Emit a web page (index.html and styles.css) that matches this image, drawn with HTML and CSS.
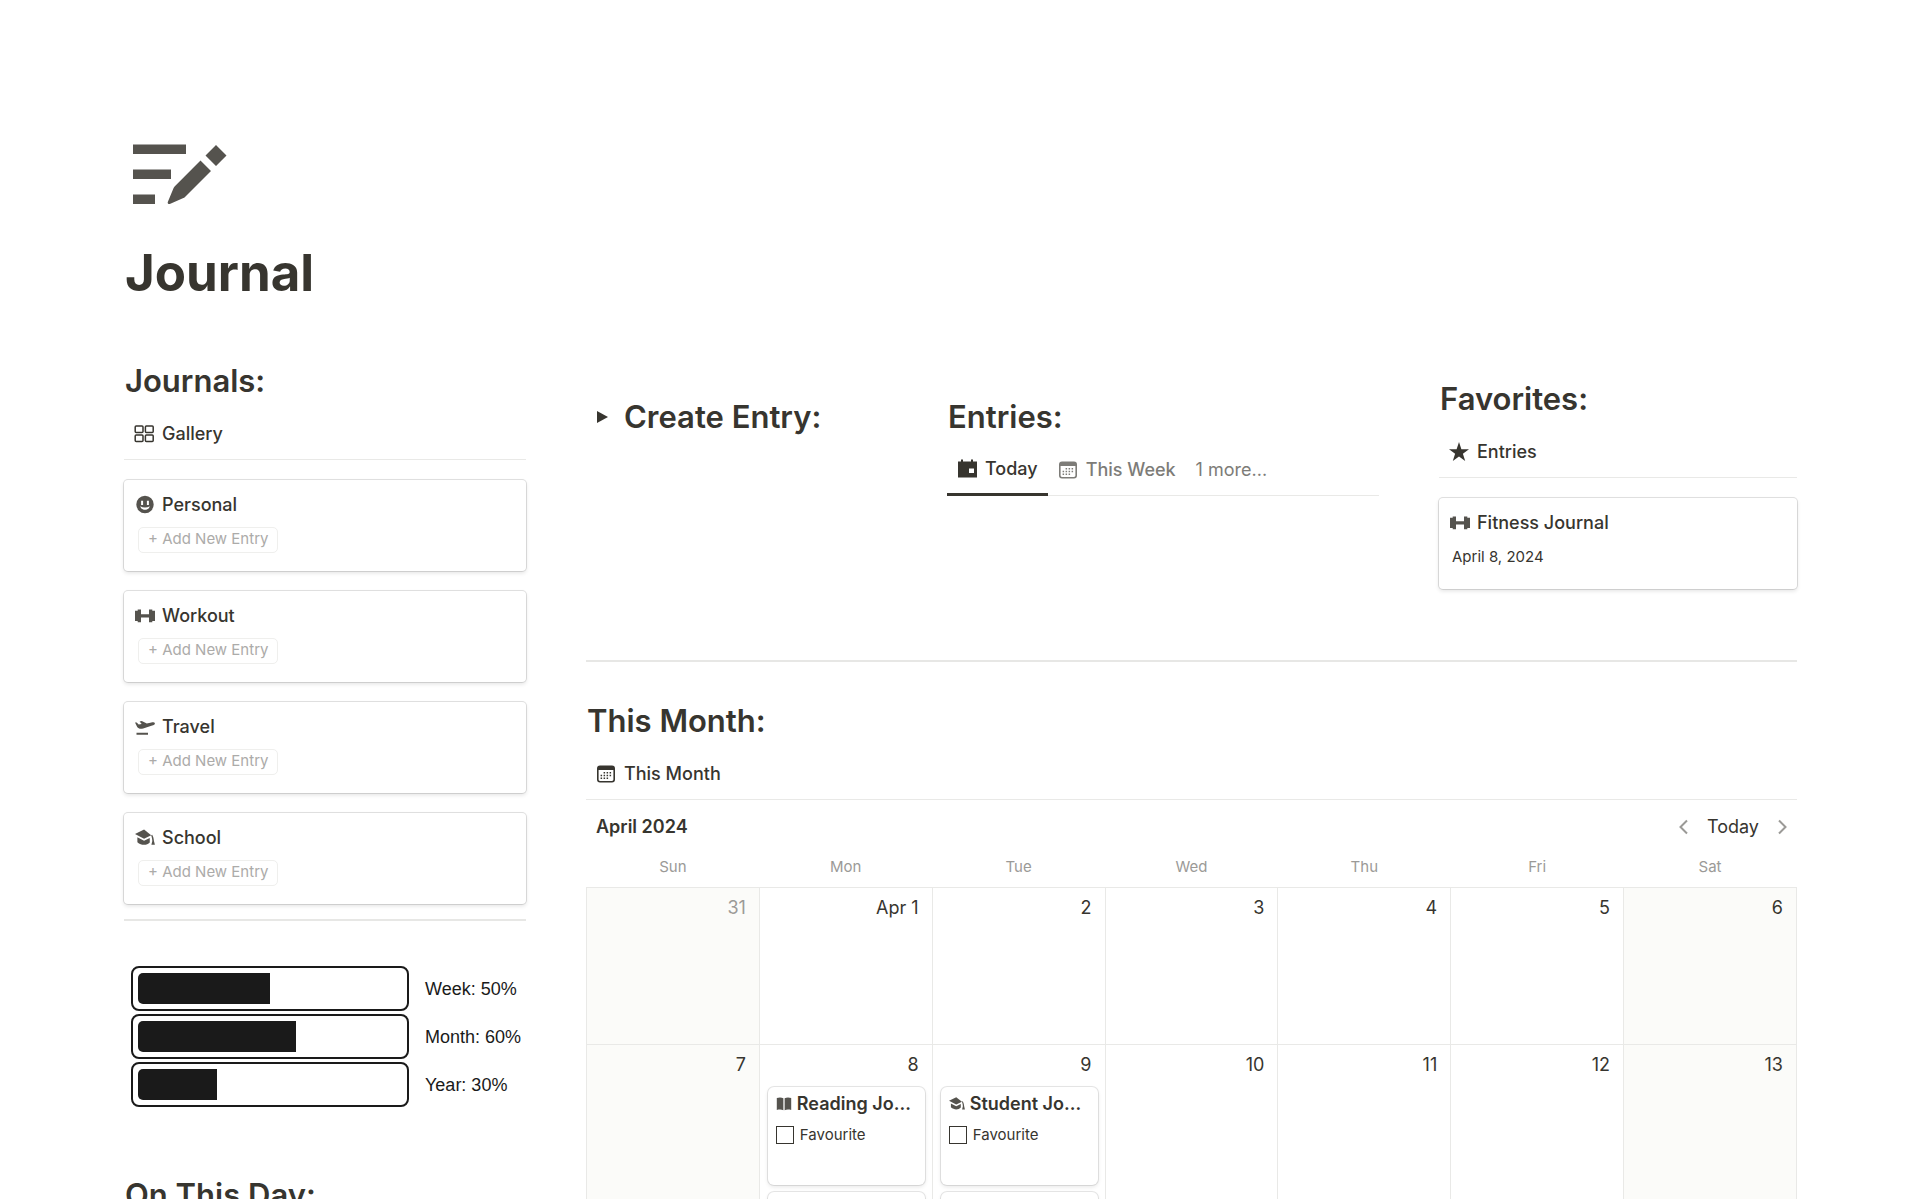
FILE: index.html
```html
<!DOCTYPE html>
<html lang="en">
<head>
	<meta charset="utf-8">
	<title>Journal</title>
	<link rel="stylesheet" href="styles.css">
</head>
<body>

<!-- shared icons -->
<svg class="sprite" aria-hidden="true">
	<symbol id="i-dumbbell" viewBox="0 0 20 20"><path d="M2.700 3.500h3.300v4.800h8V3.500h3.300v1.300H20V15h-2.700v1.200H14v-4.700H6v4.700H2.700V15H0V4.800h2.700z"/></symbol>
	<symbol id="i-cap" viewBox="0 1 21 18"><path d="M9.500 1L0 5.700l9.500 5.100L17 7z"/><path d="M2.500 9.300l7 3.700 6-3.100v4.800c-1.500 1.600-3.600 2.500-6 2.500s-4.800-1-7-2.800z"/><path d="M17 7l1-.5c1.300 2 1.700 4.300 1.900 6.600l1 4h-3.700l1-4c-.1-2-.4-4.100-1.200-6.100z"/></symbol>
	<symbol id="i-calendar" viewBox="0 0 20 20"><path fill-rule="evenodd" d="M4 1.500h12a3 3 0 0 1 3 3v11a3 3 0 0 1-3 3H4a3 3 0 0 1-3-3v-11a3 3 0 0 1 3-3zM2.600 6v9.500c0 .8.600 1.400 1.400 1.400h12c.8 0 1.400-.6 1.400-1.400V6z"/><path d="M7.600 8h1.500v1.500H7.600zm3 0h1.500v1.500h-1.500zm3 0h1.500v1.500h-1.500zM4.600 10.800h1.500v1.500H4.600zm3 0h1.500v1.500H7.600zm3 0h1.500v1.500h-1.500zm3 0h1.500v1.500h-1.500zM4.600 13.600h1.500v1.500H4.600zm3 0h1.500v1.500H7.600zm3 0h1.500v1.500h-1.500z"/></symbol>
</svg>

<div class="page">
	<header class="page-header">
		<svg class="page-icon" viewBox="0 0 94 62" aria-hidden="true">
			<path d="M0 0.500h53v9.500H0zM0 25.500h38v9.500H0zM0 50.500h22v9.500H0z"/>
			<path d="M83 1l10.500 10.500L83 22 72.500 11.500zM67.500 16.500L78 27 52 53c-.6.600-1 .8-1.600 1l-13.600 6c-1.400.4-2.500-.8-2-2L40.600 44c.3-.7.600-1.100 1-1.500z"/>
		</svg>
		<h1>Journal</h1>
	</header>

	<div class="layout">
		<aside class="sidebar">
			<h2>Journals:</h2>
			<nav class="tabs">
				<a class="tab" href="#gallery">
					<svg class="icon" viewBox="0 0 20 20" fill="none" stroke="currentColor" stroke-width="1.500" aria-hidden="true"><rect x="1.200" y="2" width="7.800" height="6.600" rx="1"/><rect x="11.400" y="2" width="7.800" height="6.600" rx="1"/><rect x="1.200" y="11" width="7.800" height="6.600" rx="1"/><rect x="11.400" y="11" width="7.800" height="6.600" rx="1"/></svg>
					Gallery
				</a>
			</nav>
			<div class="cards" id="gallery">
				<div class="card">
					<h3>
						<svg class="icon" viewBox="0 0 20 20" aria-hidden="true"><path fill-rule="evenodd" d="M10 .8a8.700 8.700 0 1 0 0 17.400A8.700 8.700 0 0 0 10 .8zM6.100 5.800h2v4.200h-2zM11.900 5.800h2v4.200h-2zM5.200 11.200c3 1.800 6.600 1.800 9.600 0-.6 2.300-2.400 3.600-4.800 3.600s-4.200-1.300-4.800-3.600z"/></svg>
						Personal
					</h3>
					<button type="button" class="add">+ Add New Entry</button>
				</div>
				<div class="card">
					<h3><svg class="icon" aria-hidden="true"><use href="#i-dumbbell"/></svg> Workout</h3>
					<button type="button" class="add">+ Add New Entry</button>
				</div>
				<div class="card">
					<h3>
						<svg class="icon" viewBox="0 0 20 20" aria-hidden="true"><path d="M1.500 15.800h11.500v2H1.500zM0 5.600l1.700-.1 2 1.900 3-.4-2.100-2.400L6.800 4l5 2.400 4.600-.9c1.500-.3 3.300-.1 3.500.9.200 1-1.200 1.800-2.700 2.200l-9 2.800c-2.600.7-4.800.4-6-1.400z"/></svg>
						Travel
					</h3>
					<button type="button" class="add">+ Add New Entry</button>
				</div>
				<div class="card">
					<h3><svg class="icon" aria-hidden="true"><use href="#i-cap"/></svg> School</h3>
					<button type="button" class="add">+ Add New Entry</button>
				</div>
			</div>
			<hr>

			<div class="progress">
				<div class="progress-row">
					<div class="bar"><div class="fill" style="width:50%"></div></div>
					<span>Week: 50%</span>
				</div>
				<div class="progress-row">
					<div class="bar"><div class="fill" style="width:60%"></div></div>
					<span>Month: 60%</span>
				</div>
				<div class="progress-row">
					<div class="bar"><div class="fill" style="width:30%"></div></div>
					<span>Year: 30%</span>
				</div>
			</div>

			<h2>On This Day:</h2>
		</aside>

		<main>
			<div class="top">
				<details class="create">
					<summary>
						<svg class="icon" viewBox="0 0 20 20" aria-hidden="true"><path d="M1 4l11 6-11 6z"/></svg>
						<h2>Create Entry:</h2>
					</summary>
				</details>

				<section class="entries">
					<h2>Entries:</h2>
					<nav class="tabs">
						<a class="tab active" href="#today">
							<svg class="icon" viewBox="0 0 20 20" aria-hidden="true"><path fill-rule="evenodd" d="M1 2.500h3V.5h2v2h8V.5h2v2h4v16H1zM12 9.500v4.500h5V9.500z"/></svg>
							Today
						</a>
						<a class="tab muted" href="#week"><svg class="icon" aria-hidden="true"><use href="#i-calendar"/></svg> This Week</a>
						<a class="tab muted more" href="#more">1 more...</a>
					</nav>
				</section>

				<section class="favorites">
					<h2>Favorites:</h2>
					<nav class="tabs">
						<a class="tab" href="#favorites">
							<svg class="icon" viewBox="0 0 20 20" aria-hidden="true"><path d="M10 0l2.400 7.200H20l-6.100 4.500 2.300 7.300L10 14.600 3.800 19l2.300-7.300L0 7.200h7.600z"/></svg>
							Entries
						</a>
					</nav>
					<div class="cards" id="favorites">
						<div class="card">
							<h3><svg class="icon" aria-hidden="true"><use href="#i-dumbbell"/></svg> Fitness Journal</h3>
							<p>April 8, 2024</p>
						</div>
					</div>
				</section>
			</div>
			<hr>

			<section class="month">
				<h2>This Month:</h2>
				<nav class="tabs">
					<a class="tab" href="#calendar"><svg class="icon" aria-hidden="true"><use href="#i-calendar"/></svg> This Month</a>
				</nav>
				<div class="toolbar">
					<strong>April 2024</strong>
					<div class="pager">
						<button type="button" aria-label="Previous month"><svg class="icon" viewBox="0 0 20 20" aria-hidden="true"><path d="M13 3.500L6.500 10l6.500 6.500"/></svg></button>
						<button type="button" class="now">Today</button>
						<button type="button" aria-label="Next month"><svg class="icon" viewBox="0 0 20 20" aria-hidden="true"><path d="M7 3.500l6.500 6.500L7 16.500"/></svg></button>
					</div>
				</div>
				<table class="calendar" id="calendar">
					<thead>
						<tr><th>Sun</th><th>Mon</th><th>Tue</th><th>Wed</th><th>Thu</th><th>Fri</th><th>Sat</th></tr>
					</thead>
					<tbody>
						<tr>
							<td class="weekend other">31</td>
							<td>Apr 1</td>
							<td>2</td>
							<td>3</td>
							<td>4</td>
							<td>5</td>
							<td class="weekend">6</td>
						</tr>
						<tr>
							<td class="weekend">7</td>
							<td>8
								<div class="event">
									<h4><svg class="icon" viewBox="0 0 20 20" aria-hidden="true"><path d="M1 2.500c3-1 6-.8 8.200.2v15C7 16.700 4 16.600 1 17.500zM19 2.500c-3-1-6-.8-8.200.2v15c2.200-1 5.200-1.100 8.200-.2z"/></svg><span>Reading Journal</span></h4>
									<label><input type="checkbox"> Favourite</label>
								</div>
								<div class="event"></div>
							</td>
							<td>9
								<div class="event">
									<h4><svg class="icon" aria-hidden="true"><use href="#i-cap"/></svg><span>Student Journal</span></h4>
									<label><input type="checkbox"> Favourite</label>
								</div>
								<div class="event"></div>
							</td>
							<td>10</td>
							<td>11</td>
							<td>12</td>
							<td class="weekend">13</td>
						</tr>
					</tbody>
				</table>
			</section>
		</main>
	</div>
</div>

</body>
</html>
```

FILE: styles.css
```css
* {
	box-sizing: border-box;
}
body {
	margin: 0;
	background: #fff;
	color: #37352f;
	font-family: Inter, "Liberation Sans", sans-serif;
	font-size: 18px;
	line-height: 24px;
}
h1, h2, h3, h4, p {
	margin: 0;
}
a {
	color: inherit;
	text-decoration: none;
}
button {
	font: inherit;
	color: inherit;
	background: none;
	border: 0;
	padding: 0;
	cursor: pointer;
}
hr {
	height: 2px;
	margin: 0;
	border: 0;
	background: #e7e7e5;
}
.sprite {
	display: none;
}
.icon {
	width: 20px;
	height: 20px;
	flex: none;
	fill: currentColor;
}
.icon[fill="none"] {
	fill: none;
}

/* page */
.page {
	height: 100vh;
	overflow: hidden;
	padding: 144px 123px 0 124px;
}
.page-header {
	padding-bottom: 57px;
}
.page-icon {
	display: block;
	width: 94px;
	height: 62px;
	margin-left: 9px;
	fill: #55534e;
}
h1 {
	margin-top: 36px;
	padding-left: 1px;
	font-size: 51px;
	font-weight: 700;
	line-height: 62px;
}
h2 {
	padding-left: 1px;
	font-size: 31px;
	font-weight: 600;
	line-height: 40px;
}
.layout {
	display: grid;
	grid-template-columns: 402fr 1211fr;
	gap: 60px;
}
.layout > * {
	min-width: 0;
}

/* view tabs */
.tabs {
	display: flex;
	margin-top: 8px;
	height: 51px;
	border-bottom: 1px solid #e9e9e7;
}
.tab {
	display: flex;
	align-items: center;
	gap: 8px;
	padding: 0 10px;
	font-weight: 500;
}
.tab.active {
	margin-bottom: -1px;
	border-bottom: 3px solid #37352f;
}
.tab.muted {
	color: #7d7c78;
}
.tab.more {
	font-weight: 400;
}

/* cards */
.cards {
	display: grid;
	gap: 20px;
	margin-top: 20px;
}
.card {
	height: 91px;
	padding: 13px 11px;
	border-radius: 4px;
	box-shadow: 0 0 0 1px rgba(15, 15, 15, 0.12), 0 2px 4px rgba(15, 15, 15, 0.12);
}
.card h3 {
	display: flex;
	align-items: center;
	gap: 7px;
	font-size: 18px;
	font-weight: 500;
}
.card h3 .icon, .event .icon {
	color: #55534e;
}
.card p {
	margin-top: 10px;
	padding-left: 2px;
	font-size: 15px;
}
.add {
	display: block;
	height: 26px;
	margin: 10px 0 0 3px;
	padding: 0 9px 3px;
	border: 1px solid #efefed;
	border-radius: 5px;
	color: #acaba9;
	font-size: 15px;
	line-height: 20px;
}
.sidebar hr {
	margin-top: 15px;
}

/* progress bars */
.progress {
	display: grid;
	gap: 3px;
	margin: 45px 0 68px;
	padding-left: 7px;
	color: #1a1a1a;
	font-family: "Liberation Sans", Arial, sans-serif;
}
.progress-row {
	display: grid;
	grid-template-columns: 278fr 101fr;
	gap: 16px;
	align-items: center;
}
.progress-row span {
	white-space: nowrap;
}
.bar {
	height: 45px;
	padding: 5px;
	border: 2px solid #1a1a1a;
	border-radius: 8px;
}
.fill {
	height: 100%;
	background: #1a1a1a;
	border-radius: 5px 0 0 5px;
}

/* top row */
.top {
	display: grid;
	grid-template-columns: 301fr 432fr 358fr;
	gap: 60px;
	padding-bottom: 71px;
}
.create, .entries {
	padding-top: 36px;
}
.favorites {
	padding-top: 18px;
}
.create summary {
	display: flex;
	align-items: center;
	gap: 7px;
	padding-left: 10px;
	list-style: none;
	white-space: nowrap;
	cursor: pointer;
}

/* calendar */
.month {
	padding-top: 39px;
}
.toolbar {
	display: flex;
	justify-content: space-between;
	align-items: center;
	height: 54px;
	padding: 0 5px 0 10px;
}
.toolbar strong {
	font-weight: 600;
}
.pager {
	display: flex;
	align-items: center;
	gap: 13px;
}
.pager button {
	display: flex;
}
.pager .icon {
	fill: none;
	stroke: #9b9a97;
	stroke-width: 2;
}
.calendar {
	width: 100%;
	table-layout: fixed;
	border-collapse: collapse;
}
.calendar th {
	padding: 0 0 7px;
	color: #9b9a97;
	font-size: 15px;
	font-weight: 400;
	line-height: 26px;
}
.calendar td {
	height: 157px;
	padding: 8px 13px 8px 7px;
	border: 1px solid #e9e9e7;
	vertical-align: top;
	text-align: right;
}
.calendar .weekend {
	background: #fbfbf9;
}
.calendar .other {
	color: #9b9a97;
}
.event {
	height: 98px;
	margin: 10px -6px 0 1px;
	padding: 5px 8px;
	border-radius: 6px;
	background: #fff;
	box-shadow: 0 0 0 1px rgba(15, 15, 15, 0.1), 0 2px 4px rgba(15, 15, 15, 0.1);
	text-align: left;
}
.event + .event {
	margin-top: 7px;
}
.event h4 {
	display: flex;
	align-items: center;
	gap: 5px;
	font-size: 18px;
	font-weight: 600;
}
.event h4 span {
	overflow: hidden;
	text-overflow: ellipsis;
	white-space: nowrap;
}
.event .icon {
	width: 16px;
	height: 16px;
}
.event label {
	display: flex;
	align-items: center;
	gap: 6px;
	margin-top: 7px;
	font-size: 15px;
}
.event input {
	appearance: none;
	width: 18px;
	height: 18px;
	margin: 0;
	border: 1px solid #37352f;
}
```
